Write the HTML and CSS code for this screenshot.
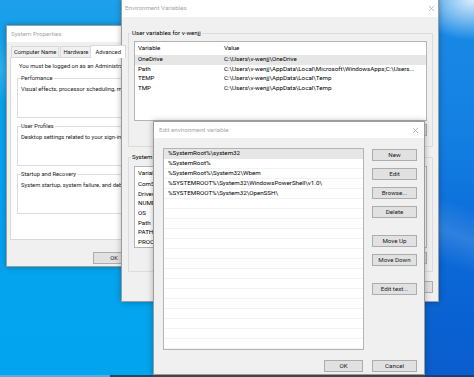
FILE: index.html
```html
<!DOCTYPE html>
<html lang="en">
<head>
    <meta charset="UTF-8">
    <meta name="viewport" content="width=device-width, initial-scale=1.0">
    <title>Environment Variables</title>
    <link rel="stylesheet" href="styles.css">
</head>
<body>
    <div class="desktop">
        <div class="desk-area"></div>
        <div class="taskbar"></div>

        <!-- System Properties (back) -->
        <div class="window sysprops">
            <div class="titlebar">
                <span>System Properties</span>
                <svg class="close" viewBox="0 0 6 6"><path d="M0 0L6 6M6 0L0 6"/></svg>
            </div>
            <div class="tabs">
                <span class="tab">Computer Name</span>
                <span class="tab">Hardware</span>
                <span class="tab active">Advanced</span>
                <span class="tab">System Protection</span>
                <span class="tab">Remote</span>
            </div>
            <div class="tab-panel">
                <p class="note">You must be logged on as an Administrator to make most of these changes.</p>
                <fieldset class="group">
                    <legend>Perfomance</legend>
                    <p>Visual effects, processor scheduling, memory usage, and virtual memory</p>
                </fieldset>
                <fieldset class="group">
                    <legend>User Profiles</legend>
                    <p>Desktop settings related to your sign-in</p>
                </fieldset>
                <fieldset class="group">
                    <legend>Startup and Recovery</legend>
                    <p>System startup, system failure, and debugging information</p>
                </fieldset>
            </div>
            <div class="footer">
                <button class="btn">OK</button>
                <button class="btn">Cancel</button>
                <button class="btn">Apply</button>
            </div>
        </div>

        <!-- Environment Variables (middle) -->
        <div class="window envvars">
            <div class="titlebar">
                <span>Environment Variables</span>
                <svg class="close" viewBox="0 0 6 6"><path d="M0 0L6 6M6 0L0 6"/></svg>
            </div>
            <div class="env-body">
                <fieldset class="env-group user">
                    <legend>User variables for v-wenjj</legend>
                    <div class="listview">
                        <div class="lv-head"><span class="col-var">Variable</span><span>Value</span></div>
                        <div class="lv-row selected"><span class="col-var">OneDrive</span><span>C:\Users\v-wenjj\OneDrive</span></div>
                        <div class="lv-row"><span class="col-var">Path</span><span>C:\Users\v-wenjj\AppData\Local\Microsoft\WindowsApps;C:\Users...</span></div>
                        <div class="lv-row"><span class="col-var">TEMP</span><span>C:\Users\v-wenjj\AppData\Local\Temp</span></div>
                        <div class="lv-row"><span class="col-var">TMP</span><span>C:\Users\v-wenjj\AppData\Local\Temp</span></div>
                    </div>
                    <div class="btn-row">
                        <button class="btn">New...</button>
                        <button class="btn">Edit...</button>
                        <button class="btn">Delete</button>
                    </div>
                </fieldset>
                <fieldset class="env-group system">
                    <legend>System variables</legend>
                    <div class="listview">
                        <div class="lv-head"><span class="col-var">Variable</span><span>Value</span></div>
                        <div class="lv-row"><span class="col-var">ComSpec</span><span>C:\Windows\system32\cmd.exe</span></div>
                        <div class="lv-row"><span class="col-var">DriverData</span><span>C:\Windows\System32\Drivers\DriverData</span></div>
                        <div class="lv-row"><span class="col-var">NUMBER_OF_PROCESSORS</span><span>4</span></div>
                        <div class="lv-row"><span class="col-var">OS</span><span>Windows_NT</span></div>
                        <div class="lv-row"><span class="col-var">Path</span><span>C:\Windows\system32;C:\Windows;C:\Windows\System32\Wbem</span></div>
                        <div class="lv-row"><span class="col-var">PATHEXT</span><span>.COM;.EXE;.BAT;.CMD;.VBS;.VBE;.JS;.JSE;.WSF;.WSH;.MSC</span></div>
                        <div class="lv-row"><span class="col-var">PROCESSOR_ARCHITECTURE</span><span>AMD64</span></div>
                    </div>
                    <div class="btn-row">
                        <button class="btn">New...</button>
                        <button class="btn">Edit...</button>
                        <button class="btn">Delete</button>
                    </div>
                </fieldset>
                <div class="btn-row dialog-row">
                    <button class="btn">OK</button>
                    <button class="btn">Cancel</button>
                </div>
            </div>
        </div>

        <!-- Edit environment variable (front) -->
        <div class="window editvar">
            <div class="titlebar">
                <span>Edit environment variable</span>
                <svg class="close" viewBox="0 0 6 6"><path d="M0 0L6 6M6 0L0 6"/></svg>
            </div>
            <div class="edit-body">
                <div class="edit-main">
                    <div class="pathlist">
                        <div class="path-row selected">%SystemRoot%\system32</div>
                        <div class="path-row">%SystemRoot%</div>
                        <div class="path-row">%SystemRoot%\System32\Wbem</div>
                        <div class="path-row">%SYSTEMROOT%\System32\WindowsPowerShell\v1.0\</div>
                        <div class="path-row">%SYSTEMROOT%\System32\OpenSSH\</div>
                        <div class="path-row"></div>
                        <div class="path-row"></div>
                        <div class="path-row"></div>
                        <div class="path-row"></div>
                        <div class="path-row"></div>
                        <div class="path-row"></div>
                        <div class="path-row"></div>
                        <div class="path-row"></div>
                        <div class="path-row"></div>
                        <div class="path-row"></div>
                        <div class="path-row"></div>
                        <div class="path-row"></div>
                        <div class="path-row"></div>
                        <div class="path-row"></div>
                        <div class="path-row"></div>
                    </div>
                    <div class="side-buttons">
                        <button class="btn">New</button>
                        <button class="btn">Edit</button>
                        <button class="btn">Browse...</button>
                        <button class="btn">Delete</button>
                        <button class="btn spaced">Move Up</button>
                        <button class="btn">Move Down</button>
                        <button class="btn spaced">Edit text...</button>
                    </div>
                </div>
                <div class="dialog-buttons">
                    <button class="btn ok">OK</button>
                    <button class="btn">Cancel</button>
                </div>
            </div>
        </div>
    </div>
</body>
</html>
```

FILE: styles.css
```css
* {
    box-sizing: border-box;
}
body {
    margin: 0;
    width: 474px;
    height: 377px;
    overflow: hidden;
    font-family: Roboto, "Liberation Sans", sans-serif;
    font-size: 6.2px;
    line-height: 9px;
    color: #1a1a1a;
}
p {
    margin: 0;
}

/* desktop wallpaper */
.desktop {
    position: relative;
    height: 377px;
    display: flex;
    flex-direction: column;
    background:
        radial-gradient(60px 40px at 472px 0, rgba(226, 241, 252, 0.95), rgba(226, 241, 252, 0)),
        linear-gradient(200deg, rgba(255, 255, 255, 0) 38%, rgba(255, 255, 255, 0.14) 44%, rgba(255, 255, 255, 0) 50%),
        linear-gradient(180deg, #1a8be6 0%, #1380e2 35%, #0b6ad8 65%, #0a5ccd 100%) right / 60px 100% no-repeat,
        linear-gradient(180deg, #1e9fe9 0%, #0aa3ee 20%, #02a4ef 100%);
}
.desk-area {
    flex: 1;
}
.taskbar {
    height: 2px;
    background: linear-gradient(90deg, #58acd9 0 110px, #1f4a62 110px 153px, #4d4d4d 153px 425px, #1b3f73 425px);
}

/* windows */
.window {
    position: absolute;
    display: flex;
    flex-direction: column;
    background: #f0f0f0;
    border: 1px solid #9c9c9c;
    box-shadow: 0 0 6px rgba(0, 0, 0, 0.3);
}
.titlebar {
    flex: none;
    display: flex;
    align-items: center;
    justify-content: space-between;
    background: #fff;
    color: #a6a6a6;
    padding: 0 5px 0 4px;
}
.close {
    width: 5px;
    height: 5px;
    stroke: #9a9a9a;
    stroke-width: 0.8;
}
.btn {
    height: 12px;
    padding: 0;
    border: 1px solid #adadad;
    background: #e1e1e1;
    font-family: inherit;
    font-size: 6.2px;
    color: #1a1a1a;
    white-space: nowrap;
}

/* System Properties */
.sysprops {
    left: 6px;
    top: 25px;
    width: 232px;
    height: 242px;
    font-size: 5.8px;
}
.sysprops .titlebar {
    height: 16px;
    font-size: 6.2px;
}
.tabs {
    display: flex;
    align-items: flex-end;
    height: 15px;
    padding-left: 4px;
}
.tab {
    height: 11px;
    padding: 1px 2px 0;
    border: 1px solid #d9d9d9;
    border-bottom: none;
    margin-right: 1px;
    white-space: nowrap;
}
.tab.active {
    position: relative;
    z-index: 1;
    height: 13px;
    margin: 0 0 -1px -2px;
    padding: 2px 4px 0;
    background: #fff;
}
.tab-panel {
    height: 183px;
    margin: 0 3px;
    padding: 4px 6px 0;
    background: #fff;
    border: 1px solid #d9d9d9;
    overflow: hidden;
}
.note {
    margin: 0 0 3px 2px;
    white-space: nowrap;
}
.group {
    height: 44px;
    margin: 0 0 4px;
    padding: 0 3px;
    border: 1px solid #dcdcdc;
}
.group legend {
    padding: 0 1px 0 0;
    line-height: 9px;
}
.group p {
    margin-top: 2px;
    white-space: nowrap;
}
.footer {
    display: flex;
    justify-content: flex-end;
    gap: 6px;
    padding: 12px 6px 0 0;
}
.footer .btn {
    width: 42px;
    font-size: 5.8px;
}

/* Environment Variables */
.envvars {
    left: 121px;
    top: -1px;
    width: 318px;
    height: 303px;
}
.envvars .titlebar {
    height: 17px;
    padding: 0 4px 0 3px;
}
.env-body {
    padding: 0 5px 0 6px;
}
.env-group {
    margin: 0;
    padding: 0 5px;
    border: 1px solid #dcdcdc;
}
.env-group legend {
    padding: 0 1px;
    margin-left: -3px;
    color: #000;
}
.env-group.user {
    margin-top: 11.5px;
    padding-bottom: 10px;
}
.env-group.system {
    margin-top: 5.5px;
    padding-bottom: 7px;
}
.listview {
    height: 80px;
    margin-top: 3.5px;
    background: #fff;
    border: 1px solid #b4b4b4;
    overflow: hidden;
    color: #000;
}
.system .listview {
    height: 82px;
    margin-top: 4.5px;
}
.lv-head,
.lv-row {
    display: flex;
    white-space: nowrap;
    padding-left: 3px;
}
.lv-head {
    height: 13px;
    align-items: center;
}
.lv-row {
    height: 9.7px;
    line-height: 9.7px;
}
.lv-row.selected {
    background: #e6e6e6;
}
.col-var {
    flex: none;
    width: 86px;
    overflow: hidden;
}
.btn-row {
    display: flex;
    justify-content: flex-end;
    gap: 6px;
    margin-top: 3px;
}
.system .btn-row {
    margin-top: 4px;
}
.btn-row .btn {
    width: 40px;
}
.dialog-row {
    margin-top: 9px;
}

/* Edit environment variable */
.editvar {
    left: 153px;
    top: 121px;
    width: 272px;
    height: 254px;
}
.editvar .titlebar {
    height: 16px;
    padding: 0 6px 0 5px;
}
.edit-body {
    padding: 10px 7px 0 9px;
}
.edit-main {
    display: flex;
    gap: 8px;
}
.pathlist {
    flex: 1;
    height: 202px;
    background: #fff;
    border: 1px solid #b4b4b4;
    overflow: hidden;
    color: #000;
}
.path-row {
    height: 10px;
    line-height: 9px;
    padding-left: 4px;
    border-bottom: 1px solid #f3f3f3;
    white-space: nowrap;
}
.path-row.selected {
    background: #e6e6e6;
    border-bottom-color: #e6e6e6;
}
.side-buttons {
    flex: none;
    width: 45px;
    display: flex;
    flex-direction: column;
    gap: 7px;
    padding-top: 1px;
}
.side-buttons .btn.spaced {
    margin-top: 10px;
}
.dialog-buttons {
    display: flex;
    justify-content: flex-end;
    gap: 9px;
    margin-top: 10px;
}
.dialog-buttons .btn {
    width: 45px;
}
.dialog-buttons .btn.ok {
    width: 39px;
}
```
